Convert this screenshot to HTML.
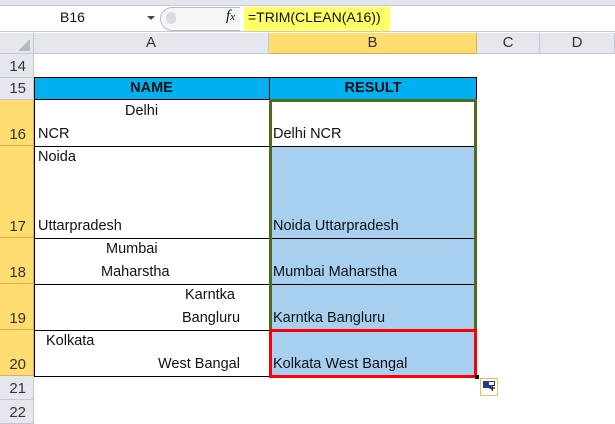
<!DOCTYPE html>
<html><head><meta charset="utf-8"><style>
*{margin:0;padding:0;box-sizing:border-box}
body{width:615px;height:420px;overflow:hidden;background:#fff;font-family:"Liberation Sans",Arial,sans-serif;font-size:14.5px;color:#111;position:relative}
.a{position:absolute}
.rh{position:absolute;left:0;width:34px;background:#e4e8ee;border-bottom:1px solid #c5cad2;border-right:1px solid #c5cad2;text-align:right;padding-right:7px;color:#333;font-size:15px;display:flex;align-items:flex-end;justify-content:flex-end;padding-bottom:2px}
.sel{background:#fedc6f;border-bottom-color:#e3ad49;border-right-color:#e3ad49}
.ch{position:absolute;top:33px;height:21px;background:#e4e8ee;border-right:1px solid #c5cad2;border-bottom:1px solid #c5cad2;text-align:center;font-size:15px;color:#333;line-height:20px}
.t{position:absolute;white-space:nowrap}
.hl{position:absolute;height:1px;background:#000}
</style></head><body>
<div class="a" style="left:0;top:0;width:615px;height:6px;background:#e2e6ec;border-bottom:1px solid #c5cad2"></div>
<div class="a" style="left:0;top:6px;width:615px;height:26px;background:#fff;border-bottom:1px solid #c5cad2"></div>
<div class="t" style="left:60px;top:9px;font-size:14px">B16</div>
<div class="a" style="left:147px;top:16px;width:0;height:0;border-left:4px solid transparent;border-right:4px solid transparent;border-top:4px solid #444"></div>
<div class="a" style="left:160px;top:7px;width:80px;height:24px;border:1px solid #b8bec6;border-radius:12px 0 0 12px;border-right:none;background:#f4f5f7"></div>
<div class="a" style="left:166px;top:12px;width:10px;height:12px;border-radius:6px;background:#d8dbe0"></div>
<div class="t" style="left:226px;top:8px;font-family:'Liberation Serif',serif;font-style:italic;font-size:15px">f<span style="font-size:11px">x</span></div>
<div class="a" style="left:244px;top:7px;width:146px;height:24px;background:#ffff66"></div>
<div class="t" style="left:248px;top:9px;font-size:14px">=TRIM(CLEAN(A16))</div>
<div class="ch" style="left:0;width:34px"></div>
<div class="a" style="left:18px;top:39px;width:0;height:0;border-left:12px solid transparent;border-bottom:12px solid #b4b9c0"></div>
<div class="ch" style="left:34px;width:235px">A</div>
<div class="ch" style="left:269px;width:208px;background:#fedc6f;border-bottom-color:#e3ad49;border-right-color:#e3ad49">B</div>
<div class="ch" style="left:477px;width:63px">C</div>
<div class="ch" style="left:540px;width:75px">D</div>
<div class="rh" style="top:54px;height:24px">14</div>
<div class="rh" style="top:78px;height:22px">15</div>
<div class="rh sel" style="top:100px;height:46px">16</div>
<div class="rh sel" style="top:146px;height:92px">17</div>
<div class="rh sel" style="top:238px;height:46px">18</div>
<div class="rh sel" style="top:284px;height:46px">19</div>
<div class="rh sel" style="top:330px;height:46px">20</div>
<div class="rh" style="top:376px;height:24px">21</div>
<div class="rh" style="top:400px;height:24px">22</div>
<div class="a" style="left:34px;top:77px;width:443px;height:23px;background:#00b0f0;border:1px solid #000"></div>
<div class="a" style="left:269px;top:77px;width:1px;height:23px;background:#000"></div>
<div class="t" style="left:34px;width:235px;top:80px;text-align:center;font-weight:bold">NAME</div>
<div class="t" style="left:269px;width:208px;top:80px;text-align:center;font-weight:bold">RESULT</div>
<div class="a" style="left:270px;top:146px;width:206px;height:230px;background:#a7cff0"></div>
<div class="hl" style="left:34px;top:146px;width:443px"></div>
<div class="hl" style="left:34px;top:238px;width:443px"></div>
<div class="hl" style="left:34px;top:284px;width:443px"></div>
<div class="hl" style="left:34px;top:330px;width:443px"></div>
<div class="hl" style="left:34px;top:376px;width:443px"></div>
<div class="a" style="left:34px;top:100px;width:1px;height:276px;background:#000"></div>
<div class="a" style="left:269px;top:100px;width:1px;height:276px;background:#000"></div>
<div class="t" style="left:125px;top:103px">Delhi</div>
<div class="t" style="left:38px;top:126px">NCR</div>
<div class="t" style="left:38px;top:149px">Noida</div>
<div class="t" style="left:38px;top:218px">Uttarpradesh</div>
<div class="t" style="left:106px;top:241px">Mumbai</div>
<div class="t" style="left:101px;top:264px">Maharstha</div>
<div class="t" style="left:185px;top:287px">Karntka</div>
<div class="t" style="left:182px;top:310px">Bangluru</div>
<div class="t" style="left:46px;top:333px">Kolkata</div>
<div class="t" style="left:158px;top:356px">West Bangal</div>
<div class="t" style="left:273px;top:126px">Delhi NCR</div>
<div class="t" style="left:273px;top:218px">Noida Uttarpradesh</div>
<div class="t" style="left:273px;top:264px">Mumbai Maharstha</div>
<div class="t" style="left:273px;top:310px">Karntka Bangluru</div>
<div class="t" style="left:273px;top:356px">Kolkata West Bangal</div>
<div class="a" style="left:269px;top:99px;width:208px;height:231px;border:3px solid #4a6e1e;border-bottom:none"></div>
<div class="a" style="left:269px;top:329px;width:208px;height:49px;border:3px solid #f00"></div>
<div class="a" style="left:475px;top:375px;width:4px;height:4px;background:#000"></div>
<div class="a" style="left:480px;top:378px;width:18px;height:18px;border:1px solid #e8c25a;background:#fff"></div>
<div class="a" style="left:483px;top:381px;width:8px;height:7px;background:#1f3d8a"></div>
<div class="a" style="left:488px;top:381px;width:7px;height:5px;border:1px solid #1f3d8a;background:#fff"></div>
<div class="t" style="left:489px;top:384px;font-size:11px;font-weight:bold;line-height:11px">+</div>
</body></html>
